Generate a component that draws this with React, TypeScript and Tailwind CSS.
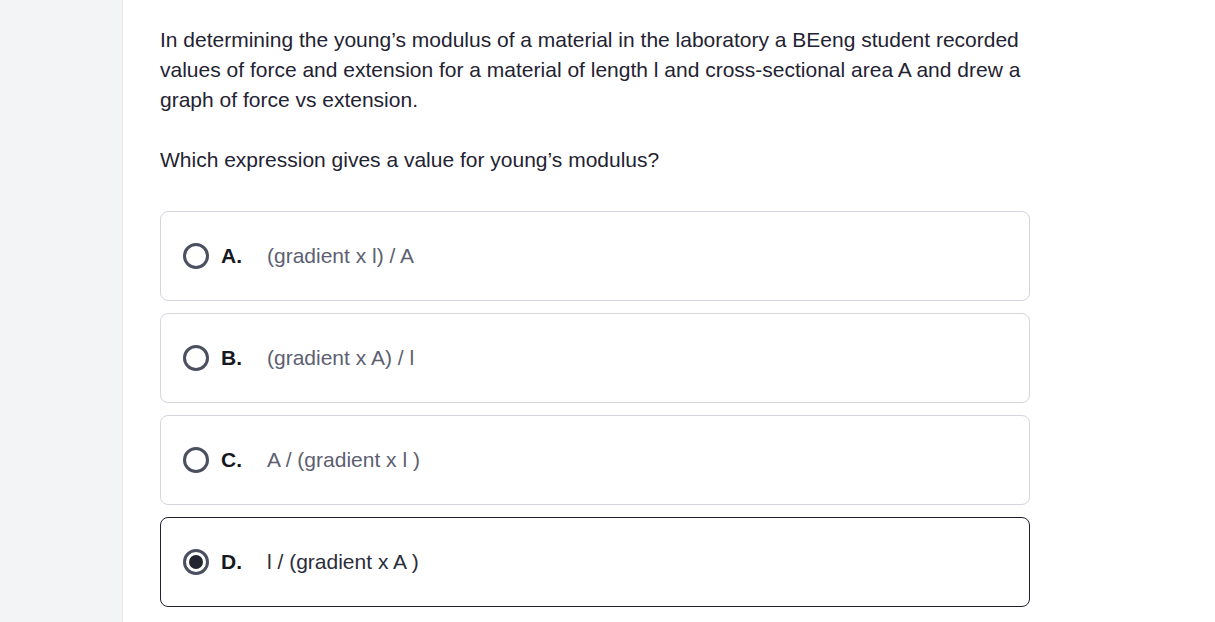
const OPTIONS = [
  { key: 'A', text: '(gradient x l) / A' },
  { key: 'B', text: '(gradient x A) / l' },
  { key: 'C', text: 'A / (gradient x l )' },
  { key: 'D', text: 'l / (gradient x A )' },
];

function Radio({ checked }: { checked: boolean }) {
  return (
    <span className="flex h-[26px] w-[26px] shrink-0 items-center justify-center rounded-full border-[3px] border-[#4b5060]">
      {checked && <span className="h-[14px] w-[14px] rounded-full bg-[#22252f]" />}
    </span>
  );
}

export default function App() {
  const selected = 'D';
  return (
    <div className="flex min-h-[622px] w-full bg-white font-['Liberation_Sans',Arial,sans-serif]">
      <aside className="w-[123px] shrink-0 border-r border-[#e5e6ea] bg-[#f3f4f6]" />
      <main className="pl-[37px] pt-[25px]">
        <div className="w-[870px] text-[21px] leading-[30px] text-[#1f2333]">
          <p>
            In determining the young’s modulus of a material in the laboratory a BEeng student recorded
            values of force and extension for a material of length l and cross-sectional area A and drew a
            graph of force vs extension.
          </p>
          <p className="mt-[30px]">Which expression gives a value for young’s modulus?</p>
        </div>

        <div className="mt-[36px] flex w-[870px] flex-col gap-[12px]">
          {OPTIONS.map((o) => {
            const on = o.key === selected;
            return (
              <label
                key={o.key}
                className={`flex h-[90px] cursor-pointer items-center rounded-lg border px-[22px] ${
                  on ? 'border-[#1f2130]' : 'border-[#d4d5dd]'
                }`}
              >
                <Radio checked={on} />
                <span className="ml-[12px] w-[46px] text-[21px] font-bold text-[#16181f]">{o.key}.</span>
                <span className={`text-[21px] ${on ? 'text-[#2a2d3a]' : 'text-[#5d6072]'}`}>{o.text}</span>
              </label>
            );
          })}
        </div>
      </main>
    </div>
  );
}
